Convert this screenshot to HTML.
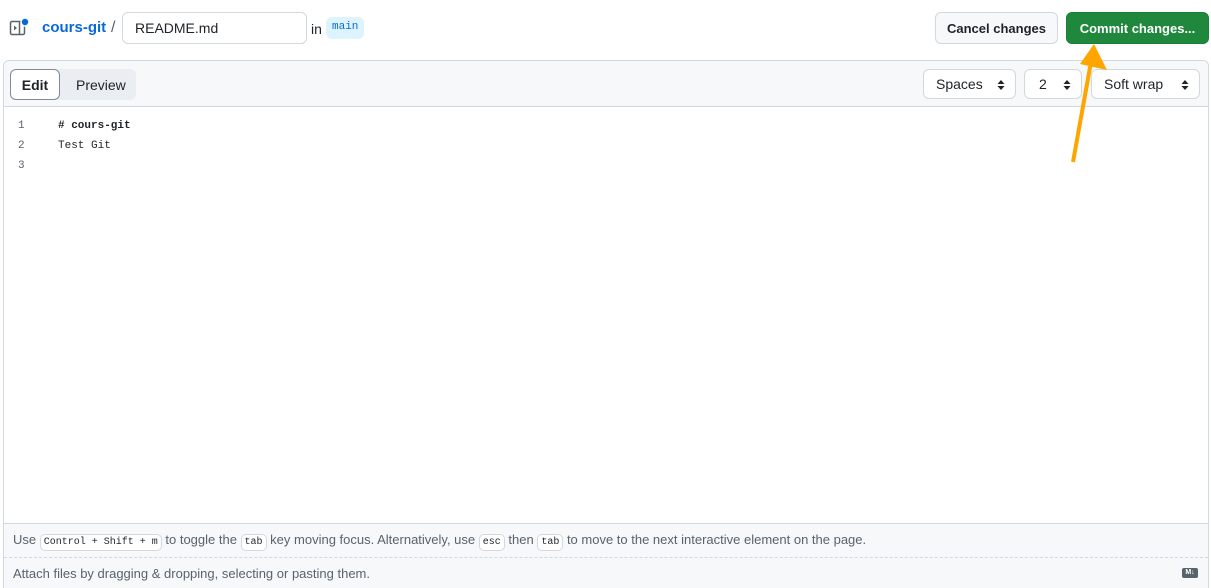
<!DOCTYPE html>
<html><head><style>
*{box-sizing:border-box;margin:0;padding:0}
html,body{width:1211px;height:588px;overflow:hidden}
body{background:#fff;font-family:"Liberation Sans",Arial,sans-serif;color:#1f2328;position:relative;font-size:14px}
.abs{position:absolute}
.mono{font-family:"Liberation Mono","DejaVu Sans Mono",monospace}
.btn{position:absolute;border:1px solid #d1d9e0;border-radius:6px;background:#f6f8fa;font-weight:bold;font-size:13px;display:flex;align-items:center;justify-content:center}
.sel{position:absolute;top:69px;height:30px;border:1px solid #d1d9e0;border-radius:6px;background:#fff;font-size:14px;display:flex;align-items:center;padding-left:12px}
.sel svg{position:absolute;right:10px;top:9px}
kbd{font-family:"Liberation Mono",monospace;font-size:10px;border:1px solid #d1d9e0;border-radius:5px;background:#fff;padding:2px 3px;color:#1f2328}
</style></head><body>
<svg class="abs" style="left:9px;top:17px" width="22" height="20" viewBox="0 0 22 20"><rect x="1.5" y="4.5" width="14" height="13" rx="1.5" fill="none" stroke="#59636e" stroke-width="1.5"/><line x1="10.5" y1="4.5" x2="10.5" y2="17.5" stroke="#59636e" stroke-width="1.5"/><path d="M5 8.5l3 2.5-3 2.5z" fill="#59636e"/><circle cx="16" cy="5" r="4" fill="#0969da" stroke="#fff" stroke-width="1.5"/></svg>
<div class="abs" style="left:42px;top:19px;font-size:15px;font-weight:bold;color:#0969da">cours-git</div>
<div class="abs" style="left:111px;top:19px;font-size:16px;color:#59636e">/</div>
<div class="abs" style="left:122px;top:12px;width:185px;height:32px;border:1px solid #d1d9e0;border-radius:6px;padding:7px 12px;font-size:14px">README.md</div>
<div class="abs" style="left:311px;top:21px;font-size:14px">in</div>
<div class="abs mono" style="left:326px;top:17px;height:22px;padding:4px 6px;background:#ddf4ff;border-radius:6px;color:#0969da;font-size:11px">main</div>
<div class="btn" style="left:935px;top:12px;width:123px;height:32px">Cancel changes</div>
<div class="btn" style="left:1066px;top:12px;width:143px;height:32px;background:#1f883d;border-color:#1a7f37;color:#fff">Commit changes...</div>
<div class="abs" style="left:3px;top:60px;width:1206px;height:540px;border:1px solid #d1d9e0;border-radius:6px 6px 0 0"></div>
<div class="abs" style="left:4px;top:61px;width:1204px;height:46px;background:#f6f8fa;border-bottom:1px solid #d1d9e0;border-radius:6px 6px 0 0"></div>
<div class="abs" style="left:10px;top:69px;width:126px;height:31px;background:#eaeef2;border-radius:6px"></div>
<div class="abs" style="left:10px;top:69px;width:50px;height:31px;background:#fff;border:1px solid #818b98;border-radius:6px;font-weight:bold;display:flex;align-items:center;justify-content:center">Edit</div>
<div class="abs" style="left:76px;top:77px;color:#1f2328">Preview</div>
<div class="sel" style="left:923px;width:93px">Spaces<svg width="8" height="12"><path d="M4 1l3.5 4h-7zM4 11l3.5-4h-7z" fill="#1f2328"/></svg></div>
<div class="sel" style="left:1024px;width:58px;padding-left:14px">2<svg width="8" height="12"><path d="M4 1l3.5 4h-7zM4 11l3.5-4h-7z" fill="#1f2328"/></svg></div>
<div class="sel" style="left:1091px;width:109px">Soft wrap<svg width="8" height="12"><path d="M4 1l3.5 4h-7zM4 11l3.5-4h-7z" fill="#1f2328"/></svg></div>
<div class="abs mono" style="left:18px;top:116px;font-size:11px;line-height:20px;color:#59636e">1<br>2<br>3</div>
<div class="abs mono" style="left:58px;top:116px;font-size:11px;line-height:20px;color:#1f2328"><b># cours-git</b><br>Test Git</div>
<div class="abs" style="left:4px;top:523px;width:1204px;height:65px;background:#f6f8fa;border-top:1px solid #d1d9e0"></div>
<div class="abs" style="left:13px;top:532px;font-size:13px;color:#59636e">Use <kbd>Control + Shift + m</kbd> to toggle the <kbd>tab</kbd> key moving focus. Alternatively, use <kbd>esc</kbd> then <kbd>tab</kbd> to move to the next interactive element on the page.</div>
<div class="abs" style="left:4px;top:557px;width:1204px;border-top:1px dashed #d1d9e0"></div>
<div class="abs" style="left:13px;top:566px;font-size:13px;color:#59636e">Attach files by dragging &amp; dropping, selecting or pasting them.</div>
<div class="abs" style="left:1182px;top:568px;width:16px;height:10px;background:#59636e;border-radius:2px;color:#fff;font-size:7px;font-weight:bold;text-align:center;line-height:10px">M↓</div>
<svg class="abs" style="left:1060px;top:40px" width="50" height="125"><line x1="13" y1="122" x2="31" y2="22" stroke="#ffa500" stroke-width="4"/><path d="M34 4L47 30 20 24z" fill="#ffa500"/></svg>
</body></html>
